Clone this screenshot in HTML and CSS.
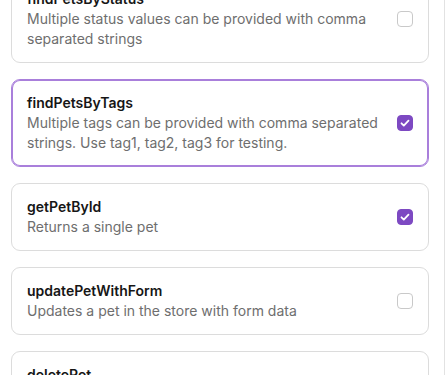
FILE: index.html
```html
<!DOCTYPE html>
<html>
<head>
<meta charset="utf-8">
<link rel="stylesheet" href="styles.css">
</head>
<body>
<div class="panel">
  <div class="list">
    <label class="card">
      <div class="text">
        <div class="title">findPetsByStatus</div>
        <div class="desc">Multiple status values can be provided with comma separated strings</div>
      </div>
      <span class="box"></span>
    </label>
    <label class="card selected">
      <div class="text">
        <div class="title">findPetsByTags</div>
        <div class="desc">Multiple tags can be provided with comma separated strings. Use tag1, tag2, tag3 for testing.</div>
      </div>
      <span class="box checked"><svg viewBox="0 0 16 16" width="16" height="16"><path d="M4.5 8.3l2.3 2.3 4.7-5" fill="none" stroke="#fff" stroke-width="1.8" stroke-linecap="round" stroke-linejoin="round"/></svg></span>
    </label>
    <label class="card">
      <div class="text">
        <div class="title">getPetById</div>
        <div class="desc">Returns a single pet</div>
      </div>
      <span class="box checked"><svg viewBox="0 0 16 16" width="16" height="16"><path d="M4.5 8.3l2.3 2.3 4.7-5" fill="none" stroke="#fff" stroke-width="1.8" stroke-linecap="round" stroke-linejoin="round"/></svg></span>
    </label>
    <label class="card">
      <div class="text">
        <div class="title">updatePetWithForm</div>
        <div class="desc">Updates a pet in the store with form data</div>
      </div>
      <span class="box"></span>
    </label>
    <label class="card">
      <div class="text">
        <div class="title">deletePet</div>
        <div class="desc">Deletes a pet</div>
      </div>
      <span class="box"></span>
    </label>
  </div>
</div>
</body>
</html>
```
FILE: styles.css
```css
* { box-sizing: border-box; }
html, body {
  margin: 0;
  padding: 0;
  background: #fff;
  overflow: hidden;
}
body {
  font-family: Inter, "Noto Sans", sans-serif;
  font-size: 14px;
  line-height: 20px;
  color: #1a1a1a;
}
.panel {
  width: 445px;
  height: 375px;
  border-right: 1px solid #e2e2e2;
  padding: 0 15px 0 11px;
  overflow: hidden;
}
.list {
  display: flex;
  flex-direction: column;
  gap: 16px;
  margin-top: -25px;
}
.card {
  display: flex;
  align-items: center;
  gap: 12px;
  border: 1px solid #dcdcdc;
  border-radius: 9px;
  padding: 13px 15px;
  background: #fff;
}
.card.selected {
  border-color: #a97fdb;
  box-shadow: inset 0 0 0 1px #a97fdb;
}
.text {
  flex: 1;
  min-width: 0;
}
.title {
  font-weight: 600;
  color: #161616;
}
.desc {
  color: #6e6e6e;
}
.box {
  flex: none;
  width: 16px;
  height: 16px;
  border: 1px solid #c9c9c9;
  border-radius: 4px;
  background: #fff;
  display: flex;
}
.box.checked {
  background: #7d49c2;
  border-color: #7d49c2;
}
.box svg {
  margin: -1px;
}
```
